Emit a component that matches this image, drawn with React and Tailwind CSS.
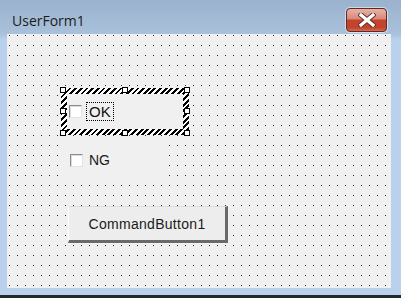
import React from 'react';

const dots =
  'bg-[conic-gradient(from_90deg_at_1px_1px,transparent_180deg,#2a2a2a_180deg_270deg,transparent_270deg)] bg-[length:8px_10px] bg-[position:2px_1px]';

const CloseButton = () => (
  <div className="w-[41px] h-[24px] rounded-[4px] border border-[#5e2a22] p-[1px] bg-[linear-gradient(#e6b3a8_0%,#d9897a_45%,#c5432c_50%,#c0452e_85%,#d86a50_100%)] shadow-[0_0_0_1px_rgba(255,255,255,0.5)] flex items-center justify-center">
    <svg width="18" height="14" viewBox="0 0 18 14">
      <path d="M3 2 L15 12 M15 2 L3 12" stroke="#5a2b25" strokeWidth="5" strokeLinecap="square" />
      <path d="M3 2 L15 12 M15 2 L3 12" stroke="#ffffff" strokeWidth="3.2" strokeLinecap="square" />
    </svg>
  </div>
);

const Check = () => (
  <div className="w-[13px] h-[13px] bg-white border-t border-l border-[#8c8c8c] border-r border-b border-r-[#e3e3e3] border-b-[#e3e3e3] shadow-[inset_1px_1px_0_#dcdcdc]" />
);

const Handle = ({ className }) => (
  <div className={`absolute w-[6px] h-[6px] bg-white border border-black ${className}`} />
);

export default function App() {
  return (
    <div
      className="w-[401px] h-[298px] overflow-hidden flex flex-col bg-[linear-gradient(#9bb2ce_0px,#aac1dc_34px,#b9d1ea_40px,#b9d1ea_100%)]"
      style={{ fontFamily: '"Liberation Sans", Arial, sans-serif' }}
    >
      {/* title bar */}
      <div className="h-[34px] flex items-start shrink-0">
        <span
          className="ml-[12px] mt-[12px] text-[14px] leading-[17px] text-[#1b1b1b]"
          style={{ fontFamily: '"Open Sans", "Noto Sans", sans-serif' }}
        >
          UserForm1
        </span>
        <div className="ml-auto mr-[14px] mt-[8px]">
          <CloseButton />
        </div>
      </div>

      {/* design canvas */}
      <div className="flex shrink-0">
        <div className={`ml-[7px] w-[384px] h-[254px] bg-[#f0f0f0] ${dots} flex flex-col items-start`}>
          {/* selected OK checkbox */}
          <div className="relative ml-[54px] mt-[54px] w-[128px] h-[47px] p-[6px] bg-[repeating-linear-gradient(-45deg,#000_0px,#000_2px,#fff_2px,#fff_4px)]">
            <div className="w-full h-full bg-[#f0f0f0] flex items-center pl-[2px] gap-[4px]">
              <Check />
              <span className="border border-dotted border-black px-[2px] h-[19px] flex items-center text-[15px] leading-none text-[#111]">
                OK
              </span>
            </div>
            <Handle className="-left-[1px] -top-[1px]" />
            <Handle className="left-[61px] -top-[1px]" />
            <Handle className="-right-[1px] -top-[1px]" />
            <Handle className="-left-[1px] top-[20px]" />
            <Handle className="-right-[1px] top-[20px]" />
            <Handle className="-left-[1px] -bottom-[1px]" />
            <Handle className="left-[61px] -bottom-[1px]" />
            <Handle className="-right-[1px] -bottom-[1px]" />
          </div>

          {/* NG checkbox */}
          <div className="ml-[55px] mt-[6px] w-[105px] h-[38px] bg-[#f0f0f0] flex items-center pl-[8px] gap-[6px]">
            <Check />
            <span className="text-[14px] leading-none text-[#1a1a1a]">NG</span>
          </div>

          {/* command button */}
          <div className="ml-[61px] mt-[27px] w-[160px] h-[37px] bg-[#ededed] border-t border-l border-t-[#dadada] border-l-[#ffffff] border-r-[3px] border-b-[3px] border-r-[#6a6a6a] border-b-[#6a6a6a] flex items-center justify-center">
            <span className="text-[14px] leading-none text-[#1a1a1a] tracking-[0.3px]">CommandButton1</span>
          </div>
        </div>
      </div>

      <div className="h-[7px] shrink-0" />
      <div className="flex-1 bg-[#1d2a30]" />
    </div>
  );
}
